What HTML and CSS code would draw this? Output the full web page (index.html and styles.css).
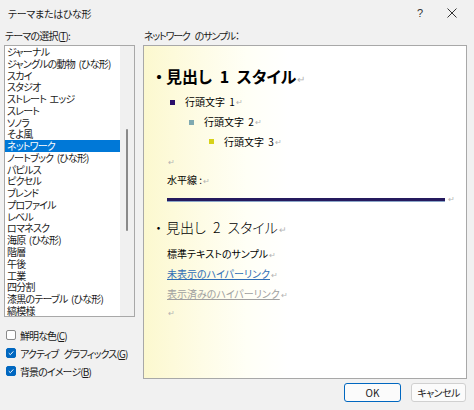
FILE: index.html
```html
<!DOCTYPE html>
<html lang="ja">
<head>
<meta charset="utf-8">
<link rel="stylesheet" href="styles.css">
</head>
<body>
<div class="dialog">
  <div class="titlebar">
    <span class="title">テーマまたはひな形</span>
    <span class="tb-btns">
      <span class="help">?</span>
      <svg class="close" width="10" height="10" viewBox="0 0 10 10"><path d="M0.5 0.5 L9.5 9.5 M9.5 0.5 L0.5 9.5" stroke="#333" stroke-width="1" fill="none"/></svg>
    </span>
  </div>
  <div class="content">
    <div class="left">
      <div class="label">テーマの選択(<u>T</u>):</div>
      <div class="listbox">
        <ul class="items">
          <li>ジャーナル</li>
          <li>ジャングルの動物 (ひな形)</li>
          <li>スカイ</li>
          <li>スタジオ</li>
          <li>ストレート エッジ</li>
          <li>スレート</li>
          <li>ソノラ</li>
          <li>そよ風</li>
          <li class="sel">ネットワーク</li>
          <li>ノートブック (ひな形)</li>
          <li>パピルス</li>
          <li>ピクセル</li>
          <li>ブレンド</li>
          <li>プロファイル</li>
          <li>レベル</li>
          <li>ロマネスク</li>
          <li>海原 (ひな形)</li>
          <li>階層</li>
          <li>午後</li>
          <li>工業</li>
          <li>四分割</li>
          <li>漆黒のテーブル (ひな形)</li>
          <li>縞模様</li>
        </ul>
        <div class="scroll"><div class="thumb"></div></div>
      </div>
      <div class="checks">
        <div class="chk"><span class="box"></span><span>鮮明な色(<u>C</u>)</span></div>
        <div class="chk"><span class="box on"><svg width="10" height="10" viewBox="0 0 10 10"><path d="M2.2 5.2 L4.2 7.1 L7.9 3" stroke="#fff" stroke-width="1.2" fill="none"/></svg></span><span>アクティブ グラフィックス(<u>G</u>)</span></div>
        <div class="chk"><span class="box on"><svg width="10" height="10" viewBox="0 0 10 10"><path d="M2.2 5.2 L4.2 7.1 L7.9 3" stroke="#fff" stroke-width="1.2" fill="none"/></svg></span><span>背景のイメージ(<u>B</u>)</span></div>
      </div>
    </div>
    <div class="right">
      <div class="label">ネットワーク のサンプル：</div>
      <div class="preview">
        <div class="h1"><span class="dot">・</span>見出し 1 スタイル<span class="ret">↵</span></div>
        <div class="lv lv1"><span class="sq sq1"></span>行頭文字 1<span class="ret">↵</span></div>
        <div class="lv lv2"><span class="sq sq2"></span>行頭文字 2<span class="ret">↵</span></div>
        <div class="lv lv3"><span class="sq sq3"></span>行頭文字 3<span class="ret">↵</span></div>
        <div class="txt t-empty"><span class="ret">↵</span></div>
        <div class="txt t-hr">水平線 :<span class="ret">↵</span></div>
        <div class="hr-row"><div class="hr"></div><span class="ret">↵</span></div>
        <div class="h2"><span class="dot">・</span>見出し 2 スタイル<span class="ret">↵</span></div>
        <div class="txt t-normal">標準テキストのサンプル<span class="ret">↵</span></div>
        <div class="txt"><span class="link">未表示のハイパーリンク</span><span class="ret">↵</span></div>
        <div class="txt"><span class="visited">表示済みのハイパーリンク</span><span class="ret">↵</span></div>
        <div class="txt t-last"><span class="ret">↵</span></div>
      </div>
      <div class="buttons">
        <button class="btn ok">OK</button>
        <button class="btn">キャンセル</button>
      </div>
    </div>
  </div>
</div>
</body>
</html>
```
FILE: styles.css
```css
* { box-sizing: border-box; }
html, body { margin: 0; padding: 0; }
body {
  width: 474px;
  height: 410px;
  overflow: hidden;
  background: #f1f1f1;
  font-family: "Noto Sans CJK JP", "Noto Sans", sans-serif;
  font-feature-settings: "palt";
  font-size: 10px;
  color: #1a1a1a;
}
.dialog { width: 474px; height: 410px; display: flex; flex-direction: column; }
.titlebar {
  height: 26px;
  display: flex;
  align-items: center;
  justify-content: space-between;
  padding: 0 17px 0 8px;
}
.title { font-size: 10px; letter-spacing: -0.3px; }
.tb-btns { display: flex; align-items: center; gap: 24px; }
.help { font-size: 11px; font-family: "Liberation Sans", sans-serif; color: #333; }
.close { display: block; }
.content {
  display: flex;
  gap: 8px;
  padding: 4px 0 0 4px;
}
.left { width: 131px; display: flex; flex-direction: column; }
.right { width: 324px; display: flex; flex-direction: column; }
.label { height: 15px; line-height: 12px; padding-left: 1px; font-size: 10px; white-space: pre; letter-spacing: -0.8px; }
.right .label { letter-spacing: -1.2px; word-spacing: 4px; }
.listbox {
  height: 272px;
  border: 1px solid #a8a8a8;
  background: #fff;
  display: flex;
}
.items {
  list-style: none;
  margin: 0;
  padding: 0;
  flex: 1;
}
.items li {
  height: 11.77px;
  line-height: 11.77px;
  padding-left: 2px;
  white-space: pre;
  font-size: 10px;
  letter-spacing: -0.8px;
  word-spacing: 2px;
}
.items li.sel { background: #0078d7; color: #fff; }
.scroll {
  width: 14px;
  background: #f0f0f0;
  position: relative;
}
.thumb {
  position: absolute;
  left: 6px;
  top: 83px;
  width: 2px;
  height: 102px;
  background: #8a8a8a;
  border-radius: 1px;
}
.checks { margin-top: 9px; display: flex; flex-direction: column; }
.chk { height: 18px; display: flex; align-items: center; gap: 4px; padding-left: 2px; font-size: 10px; white-space: pre; letter-spacing: -0.9px; word-spacing: 4px; }
.box {
  flex: none;
  width: 10px; height: 10px;
  border: 1px solid #8a8a8a;
  border-radius: 2px;
  background: #fff;
  display: flex;
  align-items: center;
  justify-content: center;
}
.box.on { background: #0067c0; border-color: #0067c0; }
.box svg { display: block; }
.preview {
  height: 334px;
  border: 1px solid #a8a8a8;
  background: linear-gradient(90deg, #fcf8cf 0%, #fefce6 18%, #fffff6 32%, #ffffff 45%);
  padding: 18px 0 0 12px;
  color: #000;
}
.ret { color: #b4b4b4; font-size: 8px; margin-left: 1px; }
.dot { display: inline-block; width: 11px; margin-left: -1px; }
.h1 { height: 24px; line-height: 24px; font-size: 16px; font-weight: bold; word-spacing: 4px; }
.h1 .ret { font-size: 10px; font-weight: normal; }
.h2 { height: 22px; line-height: 22px; font-size: 14px; margin-top: 14px; word-spacing: 4px; font-weight: 300; }
.h2 .ret { font-size: 9px; }
.lv { height: 20px; line-height: 20px; display: flex; align-items: center; font-size: 10px; white-space: pre; word-spacing: 2px; }
.lv1 { margin-top: 4px; padding-left: 14px; }
.lv2 { padding-left: 33px; }
.lv3 { padding-left: 53px; height: 19px; }
.sq { width: 5px; height: 5px; margin-right: 10px; }
.sq1 { background: #2a0f6a; }
.sq2 { background: #7fa9b1; }
.sq3 { background: #d7d21a; }
.txt { height: 20px; line-height: 20px; padding-left: 11px; font-size: 10px; }
.t-empty { height: 19px; }
.t-normal { margin-top: 6px; }
.t-last { height: 16px; line-height: 16px; }
.hr-row { display: flex; align-items: flex-end; padding-left: 11px; margin-top: 6px; height: 6px; }
.hr {
  width: 278px;
  height: 4px;
  background: #251a5e;
  border-bottom: 1px solid #8aa6c8;
}
.hr-row .ret { line-height: 6px; margin-left: 3px; }
.link { color: #2f6db5; text-decoration: underline; }
.visited { color: #a0a0a0; text-decoration: underline; }
.buttons { display: flex; justify-content: flex-end; gap: 10px; margin-top: 4px; padding-right: 1px; }
.btn {
  height: 19px;
  font-family: inherit;
  font-feature-settings: "palt";
  font-size: 10px;
  background: #fbfbfb;
  border: 1px solid #d0d0d0;
  border-radius: 3px;
  padding: 0;
  width: 55px;
  color: #1a1a1a;
  letter-spacing: -0.6px;
}
.btn.ok { width: 57px; border: 1px solid #0067c0; letter-spacing: 0; }
```
